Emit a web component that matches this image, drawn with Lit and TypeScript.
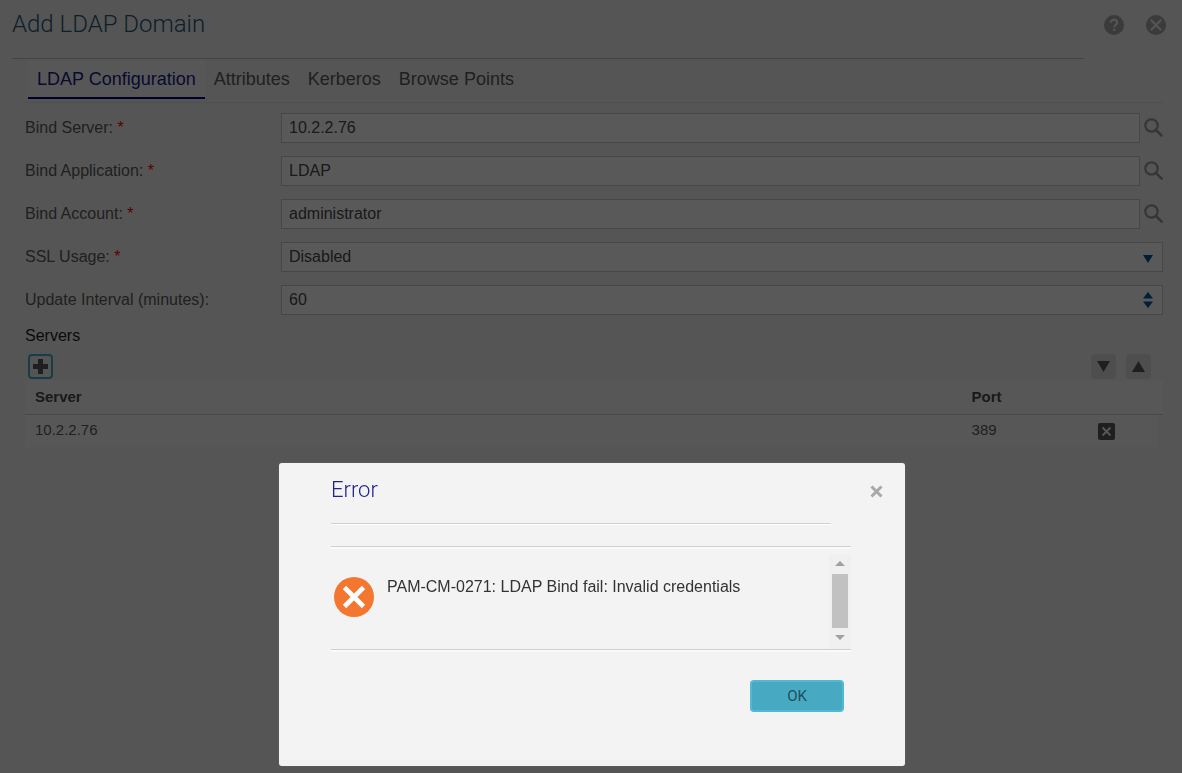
import { LitElement, html, css, svg } from "lit";
import { customElement, state } from "lit/decorators.js";

interface LookupField {
  id: string;
  label: string;
  value: string;
}

interface ServerEntry {
  host: string;
  port: number;
}

@customElement("app-root")
export class AppRoot extends LitElement {
  static styles = css`
    :host {
      display: block;
      min-height: 100vh;
      background: #f3f3f3;
      font-family: "Liberation Sans", Arial, sans-serif;
      font-size: 16px;
      line-height: 20px;
      color: #5c5c5c;
    }
    * {
      box-sizing: border-box;
    }
    button {
      font: inherit;
      color: inherit;
      background: none;
      border: 0;
      padding: 0;
      margin: 0;
      display: flex;
      align-items: center;
      justify-content: center;
      cursor: pointer;
    }
    svg {
      display: block;
    }
    .page {
      padding: 0 19px 0 12px;
    }
    .header {
      display: flex;
      justify-content: space-between;
      gap: 20px;
      height: 59px;
    }
    .title {
      flex: 1;
      margin: 0;
      padding-top: 8px;
      border-bottom: 1px solid #c2c2c2;
      font-family: Roboto, sans-serif;
      font-weight: 300;
      font-size: 24px;
      line-height: 32px;
      color: #2a5a7a;
    }
    .header-actions {
      display: flex;
      gap: 22px;
      padding-top: 15px;
      margin-right: -3px;
      height: 35px;
      color: #a8a8a8;
    }
    .content {
      padding-left: 13px;
    }
    .tabs {
      display: flex;
      height: 44px;
      padding: 2px 0 3px 3px;
      border-bottom: 1px solid #d9e6e6;
      font-size: 18px;
    }
    .tab {
      padding: 0 9px;
      color: #5c5c5c;
      border-bottom: 2px solid transparent;
    }
    .tab.active {
      color: #1b1b8c;
      background: #fafafa;
      border-bottom-color: #00007a;
    }
    .form {
      display: grid;
      row-gap: 13px;
      padding-top: 10px;
    }
    .row {
      display: grid;
      grid-template-columns: 256px 1fr;
      align-items: center;
    }
    .required {
      color: #ff0000;
    }
    .lookup {
      display: flex;
      gap: 4px;
    }
    .lookup .box {
      flex: 1;
      min-width: 0;
    }
    .lookup button {
      width: 19px;
      height: 28px;
      color: #9a9a9a;
    }
    .box {
      width: 100%;
      height: 30px;
      margin: 0;
      padding: 0 7px;
      border: 1px solid #cccccc;
      border-radius: 0;
      background: #fff;
      color: #4a4a4a;
      font: inherit;
      appearance: none;
      outline: none;
    }
    input[type="number"] {
      appearance: textfield;
    }
    input[type="number"]::-webkit-inner-spin-button {
      display: none;
    }
    .stack {
      display: grid;
      align-items: center;
    }
    .stack > * {
      grid-area: 1 / 1;
    }
    .stack svg {
      justify-self: end;
      margin-right: 10px;
      pointer-events: none;
    }
    .section {
      margin: 0;
      padding: 11px 0 8px;
      font-size: 16px;
      line-height: 20px;
      font-weight: 400;
      color: #222;
    }
    .toolbar {
      display: flex;
      align-items: center;
      gap: 10px;
      padding: 0 12px 2px 3px;
    }
    .toolbar button {
      width: 25px;
      height: 25px;
      border-radius: 4px;
      background: #e0e0e0;
      color: #595959;
    }
    .toolbar .add {
      margin-right: auto;
      border: 2px solid #47b0ca;
      background: #f3f3f3;
    }
    .servers {
      width: 100%;
      border-collapse: collapse;
      table-layout: fixed;
      font-size: 15px;
    }
    .servers th,
    .servers td {
      height: 33px;
      padding: 0 0 1px 10px;
      text-align: left;
      background: #fafafa;
    }
    .servers th {
      border-bottom: 1px solid #d0d0d0;
      color: #4a4a4a;
    }
    .servers th:first-child {
      width: 82.3%;
    }
    .servers th:nth-child(2) {
      width: 126px;
    }
    .servers td:last-child {
      background: linear-gradient(to left, #f3f3f3 6px, #fafafa 6px);
    }
    .remove {
      width: 17px;
      height: 17px;
      margin-top: 3px;
    }
    .backdrop {
      position: fixed;
      inset: 0;
      display: flex;
      align-items: flex-end;
      justify-content: center;
      padding: 0 0 7px 2px;
      background: rgba(0, 0, 0, 0.65);
    }
    .dialog {
      width: 626px;
      padding: 0 54px 54px 52px;
      border-radius: 3px;
      background: #f3f3f3;
      box-shadow: 0 0 1px rgba(160, 160, 160, 0.6);
      color: #333;
    }
    .dialog-head {
      display: flex;
      justify-content: space-between;
      height: 61px;
    }
    .dialog-title {
      flex: 1;
      margin: 0;
      padding-top: 13px;
      border-bottom: 1px solid #d0d0d0;
      box-shadow: 0 1px #fff;
      font-family: Roboto, sans-serif;
      font-weight: 300;
      font-size: 22px;
      line-height: 28px;
      color: #23238f;
    }
    .dialog-head button {
      width: 13px;
      height: 13px;
      margin: 22px -32px 0 39px;
      color: #a8a8a8;
    }
    .message {
      display: flex;
      gap: 13px;
      height: 104px;
      margin-top: 22px;
      padding: 7px 0 0 3px;
      border-top: 1px solid #d0d0d0;
      border-bottom: 1px solid #d0d0d0;
      box-shadow: 0 2px #fafafa, inset 0 2px #fafafa;
    }
    .message svg.error {
      margin-top: 23px;
    }
    .message p {
      flex: 1;
      margin: 0;
      padding-top: 23px;
    }
    .scroll {
      display: flex;
      flex-direction: column;
      align-items: center;
      justify-content: space-between;
      width: 22px;
      padding: 7px 0 9px;
      background: #f0f0f0;
      color: #a0a0a0;
    }
    .thumb {
      width: 16px;
      height: 54px;
      background: #c1c1c1;
    }
    .actions {
      display: flex;
      justify-content: flex-end;
      padding: 30px 7px 0 0;
    }
    .ok {
      width: 94px;
      height: 32px;
      border: 2px solid #52b9d4;
      border-radius: 4px;
      background: #48aac2;
      color: #1f4f5c;
      font-family: Roboto, sans-serif;
      font-size: 15px;
    }
  `;

  @state() private activeTab = 0;
  @state() private dialogOpen = true;

  private tabs = ["LDAP Configuration", "Attributes", "Kerberos", "Browse Points"];

  private lookups: LookupField[] = [
    { id: "server", label: "Bind Server:", value: "10.2.2.76" },
    { id: "application", label: "Bind Application:", value: "LDAP" },
    { id: "account", label: "Bind Account:", value: "administrator" },
  ];

  private servers: ServerEntry[] = [{ host: "10.2.2.76", port: 389 }];

  private closeDialog() {
    this.dialogOpen = false;
  }

  private renderLookup(f: LookupField) {
    return html`
      <div class="row">
        <label for=${f.id}>${f.label} <span class="required">*</span></label>
        <div class="lookup">
          <input class="box" type="text" id=${f.id} .value=${f.value} />
          <button type="button" aria-label="Search">
            <svg width="19" height="19" viewBox="0 0 19 19" fill="none" stroke="currentColor">
              <circle cx="7.5" cy="7.5" r="6.2" stroke-width="2.2" />
              <path d="M12 12l5.600 5.600" stroke-width="2.600" stroke-linecap="round" />
            </svg>
          </button>
        </div>
      </div>
    `;
  }

  private renderTriangle(points: string, width: number, height: number) {
    return html`<svg width=${width} height=${height} viewBox="0 0 ${width} ${height}">
      ${svg`<polygon points=${points} fill="currentColor" />`}
    </svg>`;
  }

  private renderDialog() {
    return html`
      <div class="backdrop">
        <div class="dialog" role="alertdialog" aria-labelledby="dialog-title">
          <div class="dialog-head">
            <h2 class="dialog-title" id="dialog-title">Error</h2>
            <button type="button" aria-label="Close" @click=${this.closeDialog}>
              <svg width="13" height="13" viewBox="0 0 13 13" stroke="currentColor" stroke-width="3">
                <path d="M1.5 1.5l10 10M11.5 1.5l-10 10" />
              </svg>
            </button>
          </div>
          <div class="message">
            <svg class="error" width="40" height="40" viewBox="0 0 40 40">
              <circle cx="20" cy="20" r="20" fill="#f37731" />
              <path d="M10.5 10.5l19 19M29.5 10.5l-19 19" stroke="#fff" stroke-width="4.6" />
            </svg>
            <p>PAM-CM-0271: LDAP Bind fail: Invalid credentials</p>
            <div class="scroll">
              ${this.renderTriangle("0,5 5,0 10,5", 10, 5)}
              <div class="thumb"></div>
              ${this.renderTriangle("0,0 5,5 10,0", 10, 5)}
            </div>
          </div>
          <div class="actions">
            <button class="ok" type="button" @click=${this.closeDialog}>OK</button>
          </div>
        </div>
      </div>
    `;
  }

  render() {
    return html`
      <main class="page">
        <header class="header">
          <h1 class="title">Add LDAP Domain</h1>
          <div class="header-actions">
            <button type="button" aria-label="Help">
              <svg width="20" height="20" viewBox="0 0 20 20">
                <circle cx="10" cy="10" r="10" fill="currentColor" />
                <path
                  d="M6.8 7.8c0-2 1.400-3 3.200-3s3.200 1 3.200 2.800c0 2-2.900 2.300-2.900 4.600"
                  fill="none"
                  stroke="#f3f3f3"
                  stroke-width="2"
                />
                <rect x="9.200" y="13.800" width="2.200" height="2.200" fill="#f3f3f3" />
              </svg>
            </button>
            <button type="button" aria-label="Close">
              <svg width="20" height="20" viewBox="0 0 20 20">
                <circle cx="10" cy="10" r="10" fill="currentColor" />
                <path d="M4.800 4.800l10.400 10.400M15.200 4.800L4.800 15.200" stroke="#f3f3f3" stroke-width="2" />
              </svg>
            </button>
          </div>
        </header>
        <div class="content">
          <nav class="tabs" role="tablist">
            ${this.tabs.map(
              (t, i) => html`<button
                type="button"
                role="tab"
                class="tab ${i === this.activeTab ? "active" : ""}"
                aria-selected=${i === this.activeTab}
                @click=${() => (this.activeTab = i)}
              >
                ${t}
              </button>`
            )}
          </nav>
          <form class="form">
            ${this.lookups.map((f) => this.renderLookup(f))}
            <div class="row">
              <label for="ssl">SSL Usage: <span class="required">*</span></label>
              <div class="stack">
                <select class="box" id="ssl">
                  <option>Disabled</option>
                  <option>Enabled</option>
                </select>
                <svg width="10" height="12" viewBox="0 0 10 12">
                  <polygon points="0,4 10,4 5,12" fill="#005a9c" />
                </svg>
              </div>
            </div>
            <div class="row">
              <label for="interval">Update Interval (minutes):</label>
              <div class="stack">
                <input class="box" type="number" id="interval" .value=${"60"} />
                <svg width="10" height="16" viewBox="0 0 10 16">
                  <polygon points="0,6.500 5,0 10,6.500" fill="#005a9c" />
                  <polygon points="0,9.500 5,16 10,9.500" fill="#005a9c" />
                </svg>
              </div>
            </div>
          </form>
          <h2 class="section">Servers</h2>
          <div class="toolbar">
            <button class="add" type="button" aria-label="Add server">
              <svg width="15" height="15" viewBox="0 0 15 15">
                <path d="M5 0h5v5h5v5h-5v5h-5v-5h-5v-5h5z" fill="currentColor" />
              </svg>
            </button>
            <button type="button" aria-label="Move down">${this.renderTriangle("0,0 13,0 6.5,11", 13, 11)}</button>
            <button type="button" aria-label="Move up">${this.renderTriangle("0,11 13,11 6.5,0", 13, 11)}</button>
          </div>
          <table class="servers">
            <thead>
              <tr>
                <th>Server</th>
                <th>Port</th>
                <th></th>
              </tr>
            </thead>
            <tbody>
              ${this.servers.map(
                (s) => html`<tr>
                  <td>${s.host}</td>
                  <td>${s.port}</td>
                  <td>
                    <button class="remove" type="button" aria-label="Remove server">
                      <svg width="17" height="17" viewBox="0 0 17 17">
                        <rect width="17" height="17" rx="2" fill="#595959" />
                        <path d="M4.500 4.500l8 8M12.500 4.500l-8 8" stroke="#fafafa" stroke-width="1.800" />
                      </svg>
                    </button>
                  </td>
                </tr>`
              )}
            </tbody>
          </table>
        </div>
      </main>
      ${this.dialogOpen ? this.renderDialog() : ""}
    `;
  }
}
